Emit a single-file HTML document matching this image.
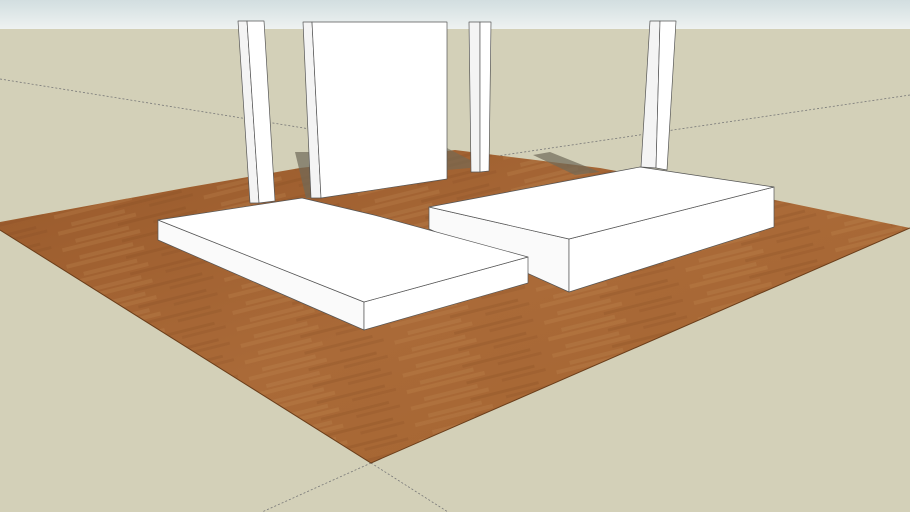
<!DOCTYPE html>
<html><head><meta charset="utf-8"><style>html,body{margin:0;padding:0;width:910px;height:512px;overflow:hidden;background:#d3d0b8}</style></head>
<body>
<svg width="910" height="512" viewBox="0 0 910 512" xmlns="http://www.w3.org/2000/svg">
<defs>
<linearGradient id="sky" x1="0" y1="0" x2="0" y2="1"><stop offset="0" stop-color="#d2dee0"/><stop offset="1" stop-color="#eef2f1"/></linearGradient>
<linearGradient id="wood" x1="0" y1="0" x2="1" y2="1"><stop offset="0" stop-color="#98592b"/><stop offset="0.5" stop-color="#aa6a38"/><stop offset="1" stop-color="#a3632f"/></linearGradient>
<pattern id="grain" width="150" height="17" patternUnits="userSpaceOnUse" patternTransform="rotate(-14)">
<rect x="0" y="1" width="80" height="4" fill="#c28a55" opacity="0.25"/>
<rect x="60" y="7" width="70" height="3" fill="#7e4520" opacity="0.2"/>
<rect x="15" y="12" width="55" height="4" fill="#c99460" opacity="0.2"/>
<rect x="95" y="13" width="45" height="3" fill="#804a22" opacity="0.18"/>
</pattern>
</defs>
<rect width="910" height="29" fill="url(#sky)"/>
<rect y="29" width="910" height="483" fill="#d3d0b8"/>
<g stroke="#777" stroke-width="0.8" stroke-dasharray="2,2" fill="none">
<line x1="0" y1="79" x2="310" y2="129"/>
<line x1="910" y1="95" x2="470" y2="160"/>
<line x1="371" y1="463" x2="262" y2="512"/>
<line x1="371" y1="463" x2="448" y2="512"/>
</g>
<polygon points="0,222 190,187 300,168 455,150 600,168 775,200 910,228 371,463 0,230" fill="url(#wood)"/>
<polygon points="0,222 190,187 300,168 455,150 600,168 775,200 910,228 371,463 0,230" fill="url(#grain)"/>
<polyline points="910,228 371,463 0,230" fill="none" stroke="#6b3e1a" stroke-width="1"/>
<!-- shadows -->
<polygon points="295,152 311,152 318,198 306,198" fill="#6f6a58" opacity="0.7"/>
<polygon points="447,148 470,160 470,168 447,170" fill="#6f6a58" opacity="0.6"/>
<polygon points="533,155 550,152 600,172 575,175" fill="#6f6a58" opacity="0.7"/>
<g stroke="#555" stroke-width="0.7" stroke-linejoin="round">
<!-- pillar 1 -->
<polygon points="238,21 247,21 259,203 250,203" fill="#f4f4f4"/>
<polygon points="247,21 264,21 275,201 259,203" fill="#fff"/>
<!-- wall -->
<polygon points="303,22 312,22 321,198 311,198" fill="#f4f4f4"/>
<polygon points="312,22 447,22 447,179 321,198" fill="#fff"/>
<!-- pillar 2 -->
<polygon points="469,22 480,22 480,172 471,172" fill="#f4f4f4"/>
<polygon points="480,22 491,22 489,171 480,172" fill="#fff"/>
<!-- pillar 4 -->
<polygon points="650,21 660,21 656,168 641,167" fill="#f4f4f4"/>
<polygon points="660,21 676,21 667,170 656,168" fill="#fff"/>
<!-- right slab -->
<polygon points="429,207 569,239 569,292 429,229" fill="#fafafa"/>
<polygon points="569,239 774,187 774,227 569,292" fill="#fff"/>
<polygon points="429,207 640,167 774,187 569,239" fill="#fff"/>
<!-- left slab -->
<polygon points="158,220 364,302 364,330 158,240" fill="#fafafa"/>
<polygon points="364,302 528,257 528,283 364,330" fill="#fff"/>
<polygon points="158,220 302,198 374,215 528,257 364,302" fill="#fff"/>
</g>
</svg>
</body></html>
